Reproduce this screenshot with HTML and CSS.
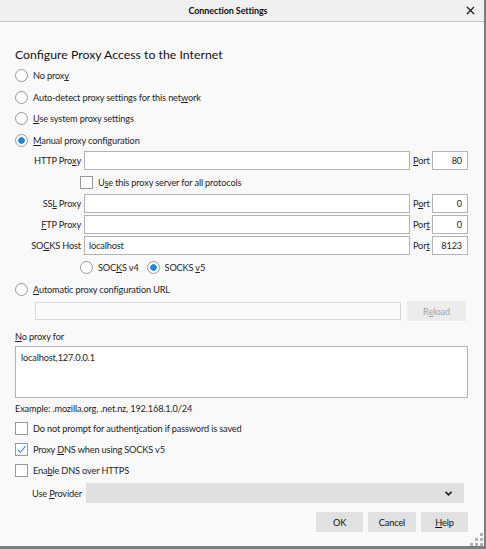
FILE: index.html
```html
<!DOCTYPE html>
<html lang="en">
<head>
<meta charset="utf-8">
<title>Connection Settings</title>
<link rel="stylesheet" href="styles.css">
</head>
<body>
<div class="window">
  <div class="titlebar">
    <span class="title">Connection Settings</span>
    <span class="close"><svg width="9" height="9" viewBox="0 0 9 9"><path d="M1 1L8 8M8 1L1 8" stroke="#1e1e1e" stroke-width="1.3" fill="none"/></svg></span>
  </div>
  <div class="content">
    <h1 class="heading">Configure Proxy Access to the Internet</h1>
    <div class="radio-row"><span class="radio"></span><span>No prox<u>y</u></span></div>
    <div class="radio-row"><span class="radio"></span><span>Auto-detect proxy settings for this net<u>w</u>ork</span></div>
    <div class="radio-row"><span class="radio"></span><span><u>U</u>se system proxy settings</span></div>
    <div class="radio-row"><span class="radio checked"></span><span><u>M</u>anual proxy configuration</span></div>

    <div class="proxy-grid">
      <span class="field-label">HTTP Pro<u>x</u>y</span>
      <input class="text-input" type="text" value="" aria-label="HTTP Proxy">
      <span class="port-label"><u>P</u>ort</span>
      <input class="text-input port" type="text" value="80" aria-label="HTTP Port">

      <div class="sub-row">
        <span class="checkbox"></span><span>U<u>s</u>e this proxy server for all protocols</span>
      </div>

      <span class="field-label">SS<u>L</u> Proxy</span>
      <input class="text-input" type="text" value="" aria-label="SSL Proxy">
      <span class="port-label">P<u>o</u>rt</span>
      <input class="text-input port" type="text" value="0" aria-label="SSL Port">

      <span class="field-label"><u>F</u>TP Proxy</span>
      <input class="text-input" type="text" value="" aria-label="FTP Proxy">
      <span class="port-label">Por<u>t</u></span>
      <input class="text-input port" type="text" value="0" aria-label="FTP Port">

      <span class="field-label">SO<u>C</u>KS Host</span>
      <input class="text-input" type="text" value="localhost" aria-label="SOCKS Host">
      <span class="port-label">Por<u>t</u></span>
      <input class="text-input port" type="text" value="8123" aria-label="SOCKS Port">

      <div class="sub-row">
        <span class="radio"></span><span class="socks-label">SOC<u>K</u>S v4</span>
        <span class="radio checked"></span><span>SOCKS <u>v</u>5</span>
      </div>
    </div>

    <div class="radio-row auto-row"><span class="radio"></span><span><u>A</u>utomatic proxy configuration URL</span></div>
    <div class="url-row">
      <div class="text-input disabled"></div>
      <span class="button reload">R<u>e</u>load</span>
    </div>

    <div class="noproxy-label"><u>N</u>o proxy for</div>
    <div class="textarea">localhost,127.0.0.1</div>
    <div class="example">Example: .mozilla.org, .net.nz, 192.168.1.0/24</div>

    <div class="check-row first"><span class="checkbox"></span><span>Do not prompt for authent<u>i</u>cation if password is saved</span></div>
    <div class="check-row"><span class="checkbox checked"><svg width="11" height="11" viewBox="0 0 11 11"><path d="M2 6L4.3 8.3L9.5 2.2" stroke="#3a8ee6" stroke-width="1.1" fill="none"/></svg></span><span>Proxy <u>D</u>NS when using SOCKS v5</span></div>
    <div class="check-row"><span class="checkbox"></span><span>Ena<u>b</u>le DNS over HTTPS</span></div>

    <div class="provider-row">
      <span class="provider-label">Use <u>P</u>rovider</span>
      <div class="select"><svg width="7" height="5" viewBox="0 0 7 5"><path d="M0.5 0.8L3.5 3.8L6.5 0.8" stroke="#1e1e1e" stroke-width="1.6" fill="none"/></svg></div>
    </div>

    <div class="button-row">
      <span class="button btn-ok">OK</span>
      <span class="button btn-cancel">Cancel</span>
      <span class="button btn-help"><u>H</u>elp</span>
    </div>
  </div>
  <svg class="grip" width="13" height="13" viewBox="0 0 13 13">
    <rect x="10" y="0" width="3" height="3" fill="#b3b3b3"/>
    <rect x="5" y="5" width="3" height="3" fill="#b3b3b3"/>
    <rect x="10" y="5" width="3" height="3" fill="#b3b3b3"/>
    <rect x="0" y="10" width="3" height="3" fill="#b3b3b3"/>
    <rect x="5" y="10" width="3" height="3" fill="#b3b3b3"/>
    <rect x="10" y="10" width="3" height="3" fill="#b3b3b3"/>
  </svg>
</div>
</body>
</html>
```
FILE: styles.css
```css
html, body {
  margin: 0;
  padding: 0;
}
body {
  font-family: Lato, "Open Sans", sans-serif;
  font-size: 9.2px;
  letter-spacing: -0.15px;
  color: #1e1e1e;
  background: #ffffff;
}
u {
  text-decoration: underline;
  text-underline-offset: 1px;
}
.window {
  position: relative;
  width: 484px;
  height: 546px;
  border-right: 2px solid #7d7d7d;
  border-bottom: 3px solid #7d7d7d;
  background: #f9f9f9;
  display: flex;
  flex-direction: column;
}
.titlebar {
  height: 21px;
  border-bottom: 1px solid #c6c6c6;
  background: #f0f0f0;
  display: flex;
  align-items: center;
}
.title {
  flex: 1;
  text-align: center;
  font-size: 9px;
  font-weight: 700;
  letter-spacing: -0.1px;
  color: #111;
}
.close {
  width: 28px;
  display: flex;
  justify-content: center;
  align-items: center;
}
.content {
  padding: 0 16px 0 15px;
  display: flex;
  flex-direction: column;
}
.heading {
  margin: 23px 0 0;
  font-size: 12.3px;
  letter-spacing: 0;
  font-weight: 400;
  line-height: 20px;
  color: #111;
}
.radio-row {
  height: 21.5px;
  display: flex;
  align-items: center;
  gap: 5px;
  white-space: nowrap;
}
.radio {
  width: 13px;
  height: 13px;
  box-sizing: border-box;
  border: 1px solid #999999;
  border-radius: 50%;
  background: #fff;
  flex: none;
}
.radio.checked {
  background: radial-gradient(circle, #1e86e0 0 3px, #fff 3.5px);
}
.proxy-grid {
  display: grid;
  grid-template-columns: 66px 1fr 16px 36px;
  grid-template-rows: 19px 20px 19px 19px 19px 20px;
  column-gap: 3px;
  row-gap: 2px;
}
.field-label {
  text-align: right;
  align-self: center;
  white-space: nowrap;
}
.port-label {
  align-self: center;
  white-space: nowrap;
}
.text-input {
  height: 19px;
  width: 100%;
  min-width: 0;
  box-sizing: border-box;
  border: 1px solid #b4b4b4;
  background: #fff;
  font-family: inherit;
  font-size: 9.2px;
  letter-spacing: -0.15px;
  color: #1e1e1e;
  padding: 0 4px;
  margin: 0;
  outline: none;
}
.text-input.port {
  text-align: right;
  padding-right: 5px;
}
.text-input.disabled {
  flex: 1;
  background: #f9f9f9;
  border-color: #d9d9d9;
  height: 18px;
}
.sub-row {
  grid-column: 2 / 5;
  margin-left: -4px;
  display: flex;
  align-items: center;
  gap: 5px;
  white-space: nowrap;
}
.socks-label {
  margin-right: 3px;
}
.checkbox {
  width: 13px;
  height: 13px;
  box-sizing: border-box;
  border: 1px solid #999999;
  background: #fff;
  flex: none;
  display: flex;
  align-items: center;
  justify-content: center;
}
.auto-row {
  height: 22px;
  margin-top: 1px;
}
.url-row {
  margin-top: 1px;
  height: 20px;
  padding-left: 20px;
  padding-right: 2px;
  display: flex;
  align-items: center;
  gap: 6px;
}
.button {
  height: 20px;
  background: #e1e1e1;
  display: flex;
  align-items: center;
  justify-content: center;
  flex: none;
  color: #111;
}
.button.reload {
  width: 59px;
  background: #ececec;
  color: #a3a3a3;
}
.noproxy-label {
  margin-top: 8px;
  line-height: 16px;
}
.textarea {
  margin-top: 1px;
  height: 52px;
  box-sizing: border-box;
  border: 1px solid #b4b4b4;
  background: #fff;
  padding: 4px 5px;
  line-height: 14px;
}
.example {
  margin-top: 3px;
  line-height: 16px;
}
.check-row {
  height: 21px;
  display: flex;
  align-items: center;
  gap: 5px;
  white-space: nowrap;
}
.check-row.first {
  margin-top: 1px;
}
.provider-row {
  margin-top: 2px;
  height: 20px;
  padding-left: 17px;
  padding-right: 4px;
  display: flex;
  align-items: center;
}
.provider-label {
  width: 54px;
  flex: none;
  white-space: nowrap;
}
.select {
  flex: 1;
  height: 20px;
  background: #e0e0e0;
  display: flex;
  align-items: center;
  justify-content: flex-end;
  padding-right: 12px;
}
.button-row {
  margin-top: 9px;
  display: flex;
  justify-content: flex-end;
  gap: 5px;
  padding-right: 0;
}
.btn-ok,
.btn-help {
  width: 47px;
}
.btn-cancel {
  width: 48px;
}
.grip {
  position: absolute;
  right: 1px;
  bottom: 0px;
}
```
